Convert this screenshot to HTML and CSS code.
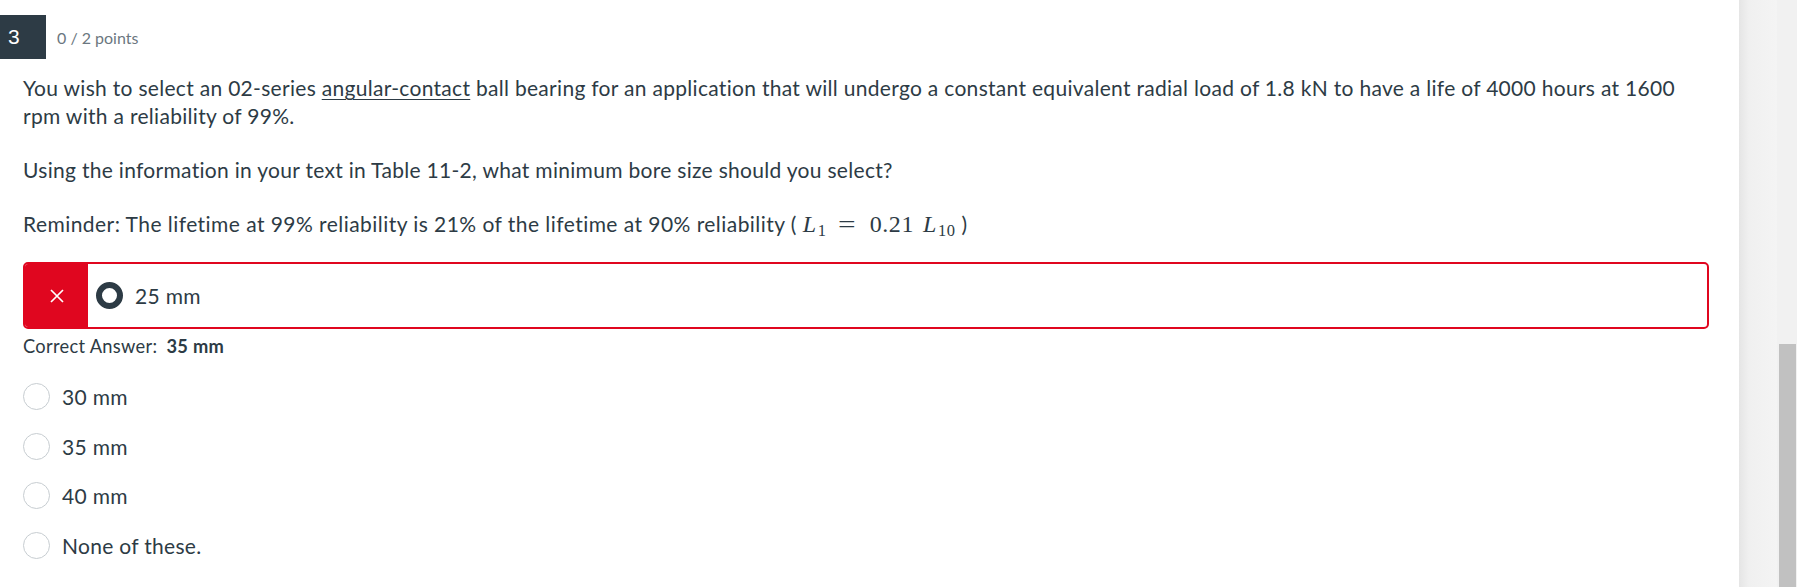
FILE: index.html
```html
<!DOCTYPE html>
<html lang="en">
<head>
<meta charset="utf-8">
<title>Question 3</title>
<link rel="stylesheet" href="styles.css">
</head>
<body>
<div class="page">
  <main class="main">
    <div class="q-header">
      <div class="q-num">3</div>
      <div class="q-points">0 / 2 points</div>
    </div>
    <div class="q-body">
      <p>You wish to select an 02-series <u>angular-contact</u> ball bearing for an application that will undergo a constant equivalent radial load of 1.8 kN to have a life of 4000 hours at 1600 rpm with a reliability of 99%.</p>
      <p>Using the information in your text in Table 11-2, what minimum bore size should you select?</p>
      <p class="reminder">Reminder: The lifetime at 99% reliability is 21% of the lifetime at 90% reliability ( <span class="math"><i>L</i><sub>1</sub><span class="eq">=</span>0.21<i class="l10">L</i><sub>10</sub></span> )</p>

      <div class="answer wrong">
        <div class="mark">
          <svg width="16" height="16" viewBox="0 0 16 16"><path d="M2 2 L14 14 M14 2 L2 14" stroke="#fff" stroke-width="1.7" fill="none"/></svg>
        </div>
        <span class="radio selected"></span>
        <span class="label">25 mm</span>
      </div>
      <div class="correct">Correct Answer: <b>35 mm</b></div>

      <div class="option"><span class="radio"></span><span class="label">30 mm</span></div>
      <div class="option"><span class="radio"></span><span class="label">35 mm</span></div>
      <div class="option"><span class="radio"></span><span class="label">40 mm</span></div>
      <div class="option"><span class="radio"></span><span class="label">None of these.</span></div>
    </div>
  </main>
  <div class="side"></div>
  <div class="scrollbar"><div class="thumb"></div></div>
</div>
</body>
</html>
```

FILE: styles.css
```css
html, body {
  margin: 0;
  padding: 0;
  background: #fff;
  overflow: hidden;
}
body {
  font-family: Lato, "Open Sans", sans-serif;
  color: #2d3b45;
}
.page {
  display: flex;
  height: 587px;
  width: 1797px;
}
.main {
  flex: 1;
  min-width: 0;
}
.q-header {
  display: flex;
  align-items: center;
  margin-top: 15px;
  height: 44px;
}
.q-num {
  width: 46px;
  height: 44px;
  box-sizing: border-box;
  background: #2d3b45;
  color: #fff;
  font-family: "Liberation Sans", Arial, sans-serif;
  font-size: 21px;
  line-height: 44px;
  padding-left: 8px;
}
.q-points {
  margin-left: 11px;
  font-size: 16px;
  color: #6b7780;
}
.q-body {
  padding: 0 30px 0 23px;
  margin-top: 15px;
  font-size: 21px;
  letter-spacing: 0.3px;
  line-height: 27.5px;
}
.q-body p {
  margin: 0 0 26.5px 0;
}
.q-body p.reminder {
  margin-bottom: 24px;
  letter-spacing: 0.45px;
}
.q-body u {
  text-decoration-thickness: 1px;
  text-underline-offset: 3px;
}
.math {
  font-family: "Liberation Serif", "Times New Roman", serif;
  font-size: 24px;
  letter-spacing: 0.6px;
}
.math i {
  font-style: italic;
}
.math sub {
  font-size: 16.5px;
  vertical-align: -4px;
  line-height: 0;
  margin-left: 1px;
}
.math .eq {
  display: inline-block;
  transform: scaleX(1.3);
  margin: 0 15px 0 14px;
}
.math .l10 {
  margin-left: 9px;
}
.answer {
  display: flex;
  align-items: center;
  height: 67px;
  box-sizing: border-box;
  border: 2px solid #e0061f;
  border-radius: 5px;
  overflow: hidden;
  width: 1686px;
}
.mark {
  width: 63px;
  align-self: stretch;
  background: #e0061f;
  display: flex;
  align-items: center;
  justify-content: center;
}
.radio {
  display: inline-block;
  width: 27px;
  height: 27px;
  box-sizing: border-box;
  border-radius: 50%;
  border: 1px solid #c7cdd1;
  background: #fff;
  flex: none;
}
.radio.selected {
  border: 6.5px solid #2d3b45;
  margin-left: 8px;
  margin-right: 12px;
}
.correct {
  margin-top: 6px;
  font-size: 18.3px;
  letter-spacing: 0.3px;
  line-height: 22px;
}
.correct b {
  font-weight: 700;
  margin-left: 4px;
}
.option {
  display: flex;
  align-items: center;
  padding: 11px 0;
  height: 27.5px;
}
.correct + .option {
  margin-top: 15px;
}
.option .radio {
  margin-right: 12px;
}
.side {
  width: 38px;
  background: linear-gradient(to right, #e5e5e5 0px, #f0f0f0 10px, #f4f4f4 38px);
}
.scrollbar {
  width: 20px;
  background: #f1f1f1;
  position: relative;
}
.thumb {
  position: absolute;
  left: 2px;
  right: 1px;
  top: 344px;
  bottom: 0;
  background: #c1c1c1;
}
```
